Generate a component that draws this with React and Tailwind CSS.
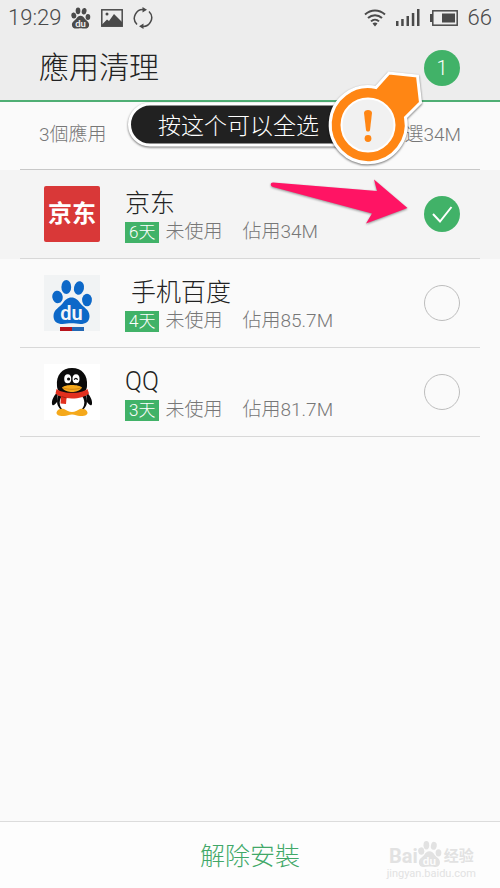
import React, { useState } from 'react';

const initialApps = [
  { id: 'jd', name: '京东', days: 6, size: '34M' },
  { id: 'baidu', name: '手机百度', days: 4, size: '85.7M' },
  { id: 'qq', name: 'QQ', days: 3, size: '81.7M' },
];

const Paw = ({ className, label = '#ffffff' }) => (
  <svg className={className} viewBox="8 3 41 46" fill="currentColor" aria-hidden="true">
    <ellipse cx="13.5" cy="21" rx="5.2" ry="6.3" transform="rotate(-10 13 21)" />
    <ellipse cx="22.3" cy="11" rx="4.9" ry="7.1" />
    <ellipse cx="35" cy="12" rx="5" ry="6.8" transform="rotate(12 35 12)" />
    <ellipse cx="43" cy="24" rx="4.9" ry="6.3" />
    <path d="M27.500 21.500c4 0 6.500 2.500 9 6 2.500 3.500 9 6 9 12.500 0 6-4 8-9 8-3.500 0-5.500-.7-9-.7s-5.500.7-9 .7c-5 0-9-2-9-8 0-6.500 6.500-9 9-12.500 2.500-3.500 5-6 9-6z" />
    <text x="27.500" y="44" textAnchor="middle" fontSize="20" fontWeight="600" fontFamily="Roboto, sans-serif" fill={label}>du</text>
  </svg>
);

const JdIcon = () => (
  <div className="flex size-14 items-center justify-center rounded-xs bg-[#d93838] text-2xl leading-none font-bold text-white">
    京东
  </div>
);

const BaiduIcon = () => (
  <div className="flex size-14 flex-col items-center justify-between bg-[#f1f3f4] pt-1 text-[#0d68c8]">
    <Paw className="h-[46px] w-[41px]" label="#f4f6f8" />
    <div className="flex h-1 w-6">
      <span className="flex-1 bg-[#b8141c]" />
      <span className="flex-1 bg-[#2468b4]" />
    </div>
  </div>
);

const QqIcon = () => (
  <svg className="size-14 bg-white" viewBox="0 0 56 56" aria-hidden="true">
    <path d="M14 28c-4 3-6.500 8-6 12 .5 2.500 3 1 5-2zM42 28c4 3 6.500 8 6 12-.5 2.500-3 1-5-2z" fill="#0a0a0a" />
    <ellipse cx="28" cy="37" rx="15" ry="13" fill="#0a0a0a" />
    <ellipse cx="28" cy="38.500" rx="12.300" ry="11" fill="#fff" />
    <path d="M13 22C12 11 18 4 28 4s16 7 15 18c0 5-4 9-15 9s-15-4-15-9z" fill="#0a0a0a" />
    <path d="M12.500 48.500c.5-3.500 4.500-4.500 7.500-3.500 2.500 1 5 3 8 3s5.500-2 8-3c3-1 7 0 7.500 3.500.3 3-4 3.500-7.500 3.500-3 0-5-1.500-8-1.500s-5 1.500-8 1.500c-3.500 0-7.800-.5-7.500-3.500z" fill="#f5a91c" />
    <path d="M12.500 25c4.500 3.200 10 3.800 15.500 3.800s11.500-.8 15.500-3.800l1.500 4.500c-4 3.500-10 5-17 5-2 0-4-.1-5.500-.4l-.5 6-5.500-.5.500-7c-2.300-.7-4-1.700-5.500-3z" fill="#e1301e" />
    <path d="M17.500 32.500l5 1.500" stroke="#a81e12" strokeWidth="1" />
    <ellipse cx="23.700" cy="14.800" rx="3.500" ry="4.500" fill="#fff" />
    <ellipse cx="32" cy="14.800" rx="3.500" ry="4.500" fill="#fff" />
    <circle cx="24.600" cy="15" r="1.600" fill="#111" />
    <path d="M30.300 15.800c.6-2 2.600-2 3.200 0" fill="none" stroke="#111" strokeWidth="1.200" />
    <path d="M18 23.500c3-3.500 17-3.500 20 0-2 3.500-6.500 4.500-10 4.500s-8-1-10-4.500z" fill="#f5a91c" />
    <path d="M18.500 23.800c6 2 13 2 19 0" fill="none" stroke="#c87a10" strokeWidth=".8" />
  </svg>
);

const icons = { jd: JdIcon, baidu: BaiduIcon, qq: QqIcon };

const StatusBar = () => (
  <div className="flex h-9 items-center justify-between px-2 text-[22px] leading-9 font-light text-[#4a4a4a]">
    <div className="flex items-center gap-2.5">
      <span>19:29</span>
      <Paw className="h-[22px] w-5" label="#ededed" />
      <svg className="h-[18px] w-[22px]" viewBox="0 0 22 18" aria-hidden="true">
        <rect x=".8" y=".8" width="20.400" height="16.400" fill="none" stroke="currentColor" strokeWidth="1.500" />
        <path d="M1 15.500l5-5 2 1.500 5-7L21 13v4H1z" fill="currentColor" />
        <circle cx="6" cy="5" r="1.500" fill="currentColor" />
      </svg>
      <svg className="h-[22px] w-5" viewBox="0 0 20 22" fill="none" stroke="currentColor" strokeWidth="1.500" aria-hidden="true">
        <path d="M4 17.500A8.700 8.700 0 0 1 11.500 2.700M16 4.500A8.700 8.700 0 0 1 8.500 19.300" />
        <path d="M9.500 0l4.500 2.800L9.500 5.600zM10.500 16.400L6 19.200l4.500 2.800z" fill="currentColor" stroke="none" />
      </svg>
    </div>
    <div className="flex items-center gap-2.5">
      <svg className="h-[18px] w-[22px]" viewBox="0 0 22 18" fill="none" stroke="currentColor" strokeWidth="2" aria-hidden="true">
        <path d="M1 5.500c6-5.300 14-5.300 20 0M4 9c4-3.800 10-3.800 14 0M7 12.400c2.300-2.200 5.700-2.200 8 0" />
        <path d="M8.500 14.500c1.500-1.400 3.500-1.400 5 0L11 17.500z" fill="currentColor" stroke="none" />
      </svg>
      <svg className="h-[18px] w-6" viewBox="0 0 24 18" fill="currentColor" aria-hidden="true">
        <rect x="0" y="12" width="2.500" height="5" />
        <rect x="5.200" y="10" width="2.500" height="7" />
        <rect x="10.500" y="7" width="2.500" height="10" />
        <rect x="15.800" y="4" width="2.500" height="13" />
        <rect x="21" y="0" width="2.500" height="17" />
      </svg>
      <svg className="h-4 w-7" viewBox="0 0 28 16" aria-hidden="true">
        <rect x="2.800" y=".8" width="24.400" height="14.400" fill="none" stroke="currentColor" strokeWidth="1.500" />
        <rect x="0" y="4" width="3" height="8" fill="currentColor" />
        <rect x="12" y="3.500" width="13" height="9" fill="currentColor" />
      </svg>
      <span>66</span>
    </div>
  </div>
);

const AppRow = ({ app, checked, onToggle }) => {
  const Icon = icons[app.id];

  return (
    <li className={checked ? 'bg-[#f4f4f4]' : ''}>
      <label htmlFor={app.id} className="mx-5 flex h-[89px] items-center border-b border-[#d8d8d8] pr-5 pl-6">
        <Icon />
        <div className="ml-[25px] flex-1 pt-1">
          <div className={`text-[25px] leading-8 font-light text-[#222] ${app.id === 'baidu' ? 'pl-1.5' : ''}`}>
            {app.name}
          </div>
          <div className="flex items-center text-[19px] leading-6 font-light text-[#777]">
            <span className="bg-[#41b268] px-1 text-[17px] leading-[21px] text-white">{app.days}天</span>
            <span className="ml-1.5">未使用</span>
            <span className="ml-5">佔用{app.size}</span>
          </div>
        </div>
        <span className="grid">
          <input
            id={app.id}
            type="checkbox"
            checked={checked}
            onChange={() => onToggle(app.id)}
            className="col-start-1 row-start-1 size-9 appearance-none rounded-full border border-[#bdbdbd] checked:border-0 checked:bg-[#41b268]"
          />
          {checked && (
            <svg className="pointer-events-none col-start-1 row-start-1 size-9" viewBox="0 0 36 36" fill="none" stroke="#fff" strokeWidth="2" aria-hidden="true">
              <path d="M9 18l7 7.500L27.500 11" />
            </svg>
          )}
        </span>
      </label>
    </li>
  );
};

const SelectAllHint = () => (
  <div className="pointer-events-none absolute top-16 right-[72px] h-28 w-[304px]">
    <svg className="absolute inset-0 size-full" viewBox="124 64 304 112" aria-hidden="true">
      <g className="drop-shadow-[0_1px_1px_rgba(0,0,0,0.55)]">
        <path d="M340 104H150a20.500 20.500 0 0 0 0 41H340z" fill="#212121" stroke="#fff" strokeWidth="3" />
      </g>
      <g className="drop-shadow-[0_1px_1px_rgba(0,0,0,0.55)]">
        <path d="M376 87.500L389 73L417.500 76L420.500 102.500L405.500 117.500A38 38 0 1 1 376 87.500z" fill="#ff8614" stroke="#fff" strokeWidth="3" />
        <circle cx="368" cy="125" r="26.500" fill="#f1f1f1" stroke="#fff" strokeWidth="2" />
        <path d="M364 113c0-4 8-4 8 0l-2 17c-.3 2-3.700 2-4 0z" fill="#ff8614" />
        <circle cx="368" cy="138.500" r="3.400" fill="#ff8614" />
      </g>
    </svg>
    <span className="relative mt-10 ml-[34px] block text-[23px] leading-[46px] font-light whitespace-nowrap text-white">
      按这个可以全选
    </span>
  </div>
);

const PointerArrow = () => (
  <svg className="pointer-events-none absolute top-[178px] right-[90px] h-12 w-[142px] drop-shadow-[0_1px_1px_rgba(0,0,0,0.4)]" viewBox="268 178 142 48" aria-hidden="true">
    <path d="M273 182.500L377 191L374 179.500L407.500 208L366 223.500L372 213.500L273 187C270 186 270 182.500 273 182.500z" fill="#ff1464" />
  </svg>
);

const Watermark = () => (
  <div className="pointer-events-none absolute right-6 bottom-2 flex flex-col items-center text-[#e2e2e2]">
    <div className="flex items-end text-xl leading-6 font-bold">
      <span>Bai</span>
      <Paw className="h-7 w-6" label="#fcfcfc" />
      <span className="ml-0.5 text-[15px]">经验</span>
    </div>
    <span className="text-[11px] leading-3">jingyan.baidu.com</span>
  </div>
);

const App = () => {
  const [selected, setSelected] = useState(['jd']);

  const toggle = (id) => {
    setSelected((prev) => (prev.includes(id) ? prev.filter((item) => item !== id) : [...prev, id]));
  };

  const selectAll = () => setSelected(initialApps.map((app) => app.id));

  return (
    <div className="relative flex min-h-screen flex-col bg-[#fafafa] font-[Roboto,'Noto_Sans_CJK_SC',sans-serif]">
      <header className="border-b-2 border-[#4fae74] bg-[#ededed]">
        <StatusBar />
        <div className="flex h-16 items-center justify-between pr-10 pl-[39px]">
          <h1 lang="zh-Hant" className="text-3xl font-light text-[#222]">應用清理</h1>
          <button type="button" onClick={selectAll} className="size-9 rounded-full bg-[#41b268] text-xl font-light text-white">
            {selected.length}
          </button>
        </div>
      </header>

      <main className="flex-1">
        <div className="mx-5 flex h-[68px] items-center justify-between border-b border-[#c8c8c8] px-[19px] text-[19px] font-light text-[#777]">
          <span>{initialApps.length}個應用</span>
          <span>已選34M</span>
        </div>
        <ul>
          {initialApps.map((app) => (
            <AppRow key={app.id} app={app} checked={selected.includes(app.id)} onToggle={toggle} />
          ))}
        </ul>
      </main>

      <footer className="relative border-t border-[#dcdcdc] bg-[#fdfdfd]">
        <button type="button" className="h-[66px] w-full pt-1 text-[25px] font-light text-[#41a868]">解除安裝</button>
        <Watermark />
      </footer>

      <SelectAllHint />
      <PointerArrow />
    </div>
  );
};

export default App;
